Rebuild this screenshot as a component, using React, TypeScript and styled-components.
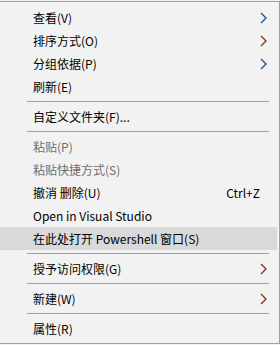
import React from "react";
import styled, { createGlobalStyle } from "styled-components";

const Global = createGlobalStyle`
  html, body { margin: 0; padding: 0; background: #f2f2f2; }
  body { font-family: "Noto Sans CJK SC", "Noto Sans", sans-serif; }
`;

const Menu = styled.div`
  box-sizing: border-box;
  margin-top: 1px;
  width: 280px;
  background: #f2f2f2;
  border-top: 1px solid #a0a0a0;
  border-right: 1px solid #a0a0a0;
  border-bottom: 1px solid #a0a0a0;
  padding: 4px 2px 3px 0;
  display: flex;
  flex-direction: column;
`;

const Item = styled.div<{ $disabled?: boolean; $active?: boolean }>`
  height: 23px;
  display: flex;
  align-items: center;
  padding-left: 33px;
  padding-right: 10px;
  font-size: 12px;
  color: ${(p) => (p.$disabled ? "#6d6d6d" : "#000")};
  background: ${(p) => (p.$active ? "#d9d9d9" : "transparent")};
  white-space: nowrap;
`;

const Label = styled.span`
  flex: 1;
`;

const Shortcut = styled.span`
  padding-right: 7px;
`;

const Separator = styled.div`
  height: 7px;
  display: flex;
  align-items: center;
  padding-left: 27px;
  padding-right: 8px;
  &::after {
    content: "";
    flex: 1;
    height: 1px;
    background: #a0a0a0;
  }
`;

const ArrowSvg = styled.svg`
  display: block;
  flex: none;
`;

const Arrow = ({ tint }: { tint: string }) => (
  <ArrowSvg width="7" height="12" viewBox="0 0 7 12">
    <path d="M1 1 L6 6 L1 11" fill="none" stroke={tint} strokeWidth="1.4" />
  </ArrowSvg>
);

type Entry =
  | { sep: true }
  | { label: string; sub?: string; disabled?: boolean; shortcut?: string; active?: boolean };

const BLUE = "#24548a";
const RED = "#8a3424";

const entries: Entry[] = [
  { label: "查看(V)", sub: BLUE },
  { label: "排序方式(O)", sub: RED },
  { label: "分组依据(P)", sub: BLUE },
  { label: "刷新(E)" },
  { sep: true },
  { label: "自定义文件夹(F)..." },
  { sep: true },
  { label: "粘贴(P)", disabled: true },
  { label: "粘贴快捷方式(S)", disabled: true },
  { label: "撤消 删除(U)", shortcut: "Ctrl+Z" },
  { label: "Open in Visual Studio" },
  { label: "在此处打开 Powershell 窗口(S)", active: true },
  { sep: true },
  { label: "授予访问权限(G)", sub: RED },
  { sep: true },
  { label: "新建(W)", sub: RED },
  { sep: true },
  { label: "属性(R)" },
];

export default function App() {
  return (
    <>
      <Global />
      <Menu>
        {entries.map((e, i) =>
          "sep" in e ? (
            <Separator key={i} />
          ) : (
            <Item key={i} $disabled={e.disabled} $active={e.active}>
              <Label>{e.label}</Label>
              {e.shortcut && <Shortcut>{e.shortcut}</Shortcut>}
              {e.sub && <Arrow tint={e.sub} />}
            </Item>
          )
        )}
      </Menu>
    </>
  );
}
